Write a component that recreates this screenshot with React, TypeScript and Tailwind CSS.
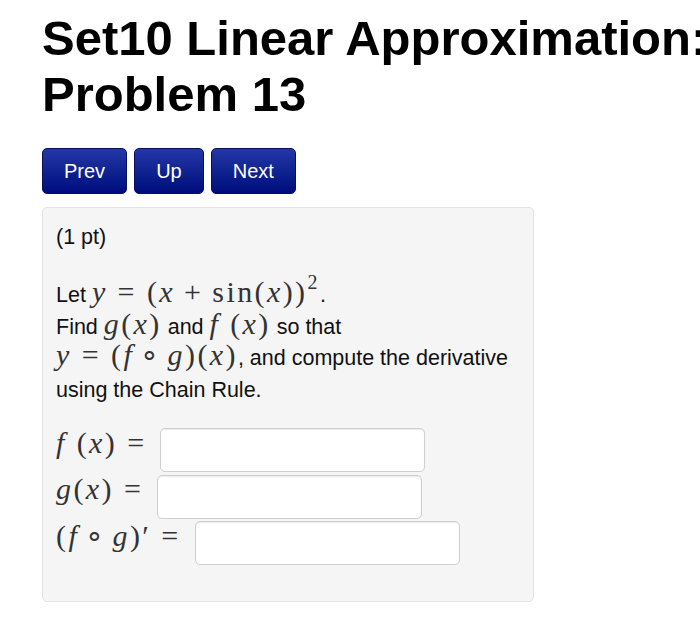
import type { ReactNode } from 'react'

function M({ children }: { children: ReactNode }) {
  return (
    <span className="font-['Liberation_Serif',serif] text-[30px] leading-[24px] text-[#333] tracking-[0.08em]">
      {children}
    </span>
  )
}

function I({ children }: { children: ReactNode }) {
  return <i className="italic">{children}</i>
}

function Eq() {
  return <span className="mx-[10px]">=</span>
}

function Bin({ c, wide }: { c: string; wide?: boolean }) {
  return <span className={wide ? 'mx-[9px]' : 'mx-[6px]'}>{c}</span>
}

function NavButton({ label }: { label: string }) {
  return (
    <button className="h-[46px] px-[21px] rounded-[5px] border border-[#05105e] bg-gradient-to-b from-[#2536a6] to-[#000a7c] text-white text-[20px]">
      {label}
    </button>
  )
}

function AnswerRow({ label }: { label: ReactNode }) {
  return (
    <div className="flex items-center h-[46.5px]">
      <span className="pb-[8px] whitespace-nowrap">{label}</span>
      <input
        type="text"
        className="ml-[4px] w-[265px] h-[44px] bg-white border border-[#cfcfcf] rounded-[5px] shadow-[inset_0_1px_1px_rgba(0,0,0,0.08)]"
      />
    </div>
  )
}

export default function App() {
  return (
    <div className="w-[700px] h-[630px] overflow-hidden bg-white pl-[42px] font-['Liberation_Sans',Arial,sans-serif] text-[#111]">
      <h1 className="pt-[10px] text-[49px] font-bold leading-[56px] whitespace-nowrap text-black">
        Set10 Linear Approximation:
        <br />
        Problem 13
      </h1>

      <div className="flex gap-[7px] mt-[26px]">
        <NavButton label="Prev" />
        <NavButton label="Up" />
        <NavButton label="Next" />
      </div>

      <div className="mt-[13px] w-[492px] rounded-[5px] border border-[#e3e3e3] bg-[#f5f5f5] px-[13px] pt-[14px] pb-[34.5px] text-[21.5px] leading-[31.5px]">
        <div>(1 pt)</div>

        <div className="mt-[26.5px] whitespace-nowrap">
          Let{' '}
          <M>
            <I>y</I>
            <Eq />
            (<I>x</I>
            <Bin c="+" wide />
            sin(<I>x</I>))<sup className="text-[20px] -top-[0.65em]">2</sup>
          </M>
          .
          <br />
          Find{' '}
          <M>
            <I>g</I>(<I>x</I>)
          </M>{' '}
          and{' '}
          <M>
            <I>f</I> (<I>x</I>)
          </M>{' '}
          so that
          <br />
          <M>
            <I>y</I>
            <Eq />
            (<I>f</I>
            <Bin c="∘" />
            <I>g</I>)(<I>x</I>)
          </M>
          , and compute the derivative
          <br />
          using the Chain Rule.
        </div>

        <div className="mt-[21px]">
          <AnswerRow
            label={
              <M>
                <I>f</I> (<I>x</I>)<Eq />
              </M>
            }
          />
          <AnswerRow
            label={
              <M>
                <I>g</I>(<I>x</I>)<Eq />
              </M>
            }
          />
          <AnswerRow
            label={
              <M>
                (<I>f</I>
                <Bin c="∘" />
                <I>g</I>)′<Eq />
              </M>
            }
          />
        </div>
      </div>
    </div>
  )
}
